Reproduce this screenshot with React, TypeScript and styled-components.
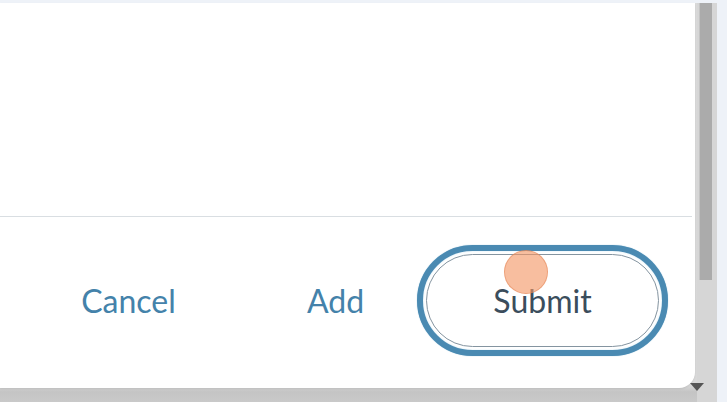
import styled, { createGlobalStyle } from "styled-components";

const GlobalStyle = createGlobalStyle`
  html, body {
    margin: 0;
    padding: 0;
    background: #eef2f8;
    font-family: Lato, "Open Sans", sans-serif;
  }
`;

const Screen = styled.div`
  position: relative;
  display: flex;
  width: 717px;
  height: 399px;
  padding-top: 3px;
`;

const Panel = styled.div`
  width: 697px;
  display: flex;
  flex-direction: column;
  background: linear-gradient(
    180deg,
    #dadada 0px,
    #d8d8d8 382px,
    #c4c4c4 389px,
    #c9c9c9 100%
  );
`;

const Card = styled.div`
  width: 695px;
  height: 385px;
  background: #ffffff;
  border-bottom-right-radius: 16px;
  display: flex;
  flex-direction: column;
  box-shadow: 0 1px 2px rgba(0, 0, 0, 0.08);
`;

const Body = styled.div`
  height: 213px;
`;

const Divider = styled.div`
  height: 1px;
  margin-right: 3px;
  background: #d9dee2;
`;

const Footer = styled.div`
  flex: 1;
  display: grid;
  grid-template-columns: repeat(3, 207px);
  align-items: center;
  padding: 0 0 4px 25px;
`;

const Cell = styled.div`
  display: flex;
  justify-content: center;
  align-items: center;
`;

const TextButton = styled.button`
  border: none;
  background: none;
  padding: 0;
  font-family: Lato, "Open Sans", sans-serif;
  font-size: 32px;
  color: #4482aa;
  cursor: pointer;
`;

const Pill = styled.button`
  position: relative;
  flex-shrink: 0;
  width: 251px;
  height: 111px;
  box-sizing: border-box;
  border: 6px solid #4a8ab2;
  border-radius: 999px;
  padding: 3px;
  background: #ffffff;
  box-shadow: 0 0 1px #7fb4d2, inset 0 0 2px #cde8f5;
  cursor: pointer;
`;

const PillInner = styled.span`
  display: flex;
  align-items: center;
  justify-content: center;
  height: 100%;
  box-sizing: border-box;
  border: 1.5px solid #8494a0;
  border-radius: 999px;
  font-family: Lato, "Open Sans", sans-serif;
  font-size: 32px;
  color: #3b4d5c;
`;

const TouchDot = styled.span`
  position: absolute;
  left: 81px;
  top: -1px;
  width: 44px;
  height: 44px;
  border-radius: 50%;
  background: rgba(244, 150, 100, 0.62);
  border: 1px solid rgba(225, 125, 75, 0.45);
  box-sizing: border-box;
`;

const Scrollbar = styled.div`
  width: 20px;
  background: #d6d6d6;
`;

const Thumb = styled.div`
  margin-left: 2px;
  width: 13px;
  height: 277px;
  background: #ababab;
  border-left: 1px solid #c4c4c4;
  box-sizing: border-box;
`;

const ScrollArrow = styled.div`
  position: absolute;
  left: 690px;
  top: 383px;
  width: 0;
  height: 0;
  border-left: 7px solid transparent;
  border-right: 7px solid transparent;
  border-top: 8px solid #555555;
`;

export default function App() {
  return (
    <>
      <GlobalStyle />
      <Screen>
        <Panel>
          <Card>
            <Body />
            <Divider />
            <Footer>
              <Cell>
                <TextButton>Cancel</TextButton>
              </Cell>
              <Cell>
                <TextButton>Add</TextButton>
              </Cell>
              <Cell>
                <Pill>
                  <PillInner>Submit</PillInner>
                  <TouchDot />
                </Pill>
              </Cell>
            </Footer>
          </Card>
        </Panel>
        <Scrollbar>
          <Thumb />
        </Scrollbar>
        <ScrollArrow />
      </Screen>
    </>
  );
}
